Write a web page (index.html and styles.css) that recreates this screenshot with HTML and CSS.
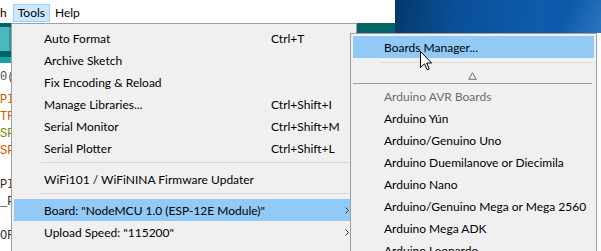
FILE: index.html
```html
<!DOCTYPE html>
<html lang="en">
<head>
  <meta charset="UTF-8" />
  <title>Arduino IDE - Tools menu</title>
  <link rel="stylesheet" href="styles.css">
</head>
<body>
  <div class="screen">
    <div class="ide">
      <div class="menubar">
        <span class="menu-title cut">h</span>
        <span class="menu-title active">Tools</span>
        <span class="menu-title">Help</span>
      </div>
      <div class="toolbar">
        <span class="tool-btn"></span>
      </div>
      <div class="tabs"></div>
      <div class="editor">
        <div class="code-line first c-grey">0(</div>
        <div class="code-line c-orange">PI</div>
        <div class="code-line c-orange">TR</div>
        <div class="code-line c-green">SP</div>
        <div class="code-line c-orange">SP</div>
        <div class="code-line">&nbsp;</div>
        <div class="code-line c-dark">PI</div>
        <div class="code-line c-dark">_P</div>
        <div class="code-line">&nbsp;</div>
        <div class="code-line c-dark">OR</div>
      </div>
    </div>
    <div class="desktop"></div>

    <!-- Tools dropdown -->
    <div class="menu tools-menu">
      <div class="menu-item"><span class="label">Auto Format</span><span class="shortcut">Ctrl+T</span></div>
      <div class="menu-item"><span class="label">Archive Sketch</span></div>
      <div class="menu-item"><span class="label">Fix Encoding &amp; Reload</span></div>
      <div class="menu-item"><span class="label">Manage Libraries...</span><span class="shortcut">Ctrl+Shift+I</span></div>
      <div class="menu-item"><span class="label">Serial Monitor</span><span class="shortcut">Ctrl+Shift+M</span></div>
      <div class="menu-item"><span class="label">Serial Plotter</span><span class="shortcut">Ctrl+Shift+L</span></div>
      <div class="menu-sep"></div>
      <div class="menu-item"><span class="label">WiFi101 / WiFiNINA Firmware Updater</span></div>
      <div class="menu-sep"></div>
      <div class="menu-item selected">
        <span class="label">Board: "NodeMCU 1.0 (ESP-12E Module)"</span>
        <svg class="sub-arrow" width="4" height="7" viewBox="0 0 4 7"><polyline points="0.5,0.5 3.5,3.5 0.5,6.5" fill="none" stroke="#333" stroke-width="1"/></svg>
      </div>
      <div class="menu-item">
        <span class="label">Upload Speed: "115200"</span>
        <svg class="sub-arrow" width="4" height="7" viewBox="0 0 4 7"><polyline points="0.5,0.5 3.5,3.5 0.5,6.5" fill="none" stroke="#333" stroke-width="1"/></svg>
      </div>
    </div>

    <!-- Boards submenu -->
    <div class="menu boards-menu">
      <div class="menu-item selected">Boards Manager...</div>
      <div class="menu-sep inset"></div>
      <div class="scroll-up">
        <svg width="9" height="8" viewBox="0 0 9 8"><polygon points="4.5,0.8 8.3,7.3 0.7,7.3" fill="none" stroke="#6d6d6d" stroke-width="1"/></svg>
      </div>
      <div class="menu-item disabled">Arduino AVR Boards</div>
      <div class="menu-item">Arduino Yún</div>
      <div class="menu-item">Arduino/Genuino Uno</div>
      <div class="menu-item">Arduino Duemilanove or Diecimila</div>
      <div class="menu-item">Arduino Nano</div>
      <div class="menu-item">Arduino/Genuino Mega or Mega 2560</div>
      <div class="menu-item">Arduino Mega ADK</div>
      <div class="menu-item">Arduino Leonardo</div>
    </div>

    <svg class="cursor" width="13" height="20" viewBox="0 0 13 20">
      <path d="M0.5,0.5 L0.5,16.5 L4.5,12.8 L7.2,18.8 L9.3,17.9 L6.7,12 L11.6,12 Z" fill="#fff" stroke="#000" stroke-width="1" stroke-linejoin="miter"/>
    </svg>
  </div>
</body>
</html>
```

FILE: styles.css
```css
* {
  box-sizing: border-box;
}

body {
  margin: 0;
  width: 601px;
  height: 251px;
  overflow: hidden;
  font-family: Lato, "Noto Sans", sans-serif;
  font-size: 12px;
  color: #000;
  background: #fff;
}

.screen {
  position: relative;
  display: flex;
  height: 251px;
}

/* IDE window behind the menus */
.ide {
  width: 395px;
  display: flex;
  flex-direction: column;
  background: #fff;
}

.menubar {
  height: 23px;
  padding-top: 4px;
  display: flex;
  background: #fff;
}

.menu-title {
  height: 18px;
  line-height: 16px;
  padding: 0 4px;
  border: 1px solid transparent;
}

.menu-title.cut {
  padding: 0;
  margin-left: -1px;
  margin-right: 5px;
}

.menu-title.active {
  background: #cce8ff;
  border-color: #99d1ff;
}

.toolbar {
  height: 34px;
  background: #006468;
  padding: 4px 0 0 0;
}

.tool-btn {
  display: block;
  width: 11px;
  height: 24px;
  background: #4db7bb;
  border-right: 2px solid #2a9a9e;
}

.tabs {
  height: 6px;
  background: #17a1a5;
}

.editor {
  padding-top: 6px;
  font-family: "Liberation Mono", monospace;
  font-size: 12px;
  line-height: 17px;
}

.code-line.first {
  margin-bottom: 6px;
}

.c-grey { color: #434f54; }
.c-orange { color: #d35400; }
.c-green { color: #728e00; }
.c-dark { color: #2c2c2c; }

.desktop {
  flex: 1;
  background:
    linear-gradient(115deg, rgba(255,255,255,0) 55%, rgba(120,180,240,0.35) 70%, rgba(255,255,255,0) 85%),
    linear-gradient(100deg, #05386b 0%, #0a4f97 25%, #0d5cad 60%, #0a56a4 100%);
}

/* Popup menus */
.menu {
  position: absolute;
  background: #f0f0f0;
  border: 1px solid #a0a0a0;
  white-space: nowrap;
}

.tools-menu {
  left: 11px;
  top: 23px;
  width: 346px;
  height: 240px;
  padding: 3px 2px;
}

.boards-menu {
  left: 350px;
  top: 33px;
  width: 247px;
  height: 230px;
  padding: 2px;
  box-shadow: 4px 0 0 #fbfbfb;
}

.menu-item {
  display: flex;
  align-items: center;
  height: 22px;
  padding-left: 30px;
}

.boards-menu .menu-item {
  padding-left: 31px;
}

.menu-item .label {
  width: 227px;
}

.menu-item.selected {
  background: #91c9f7;
}

.menu-item.disabled {
  color: #6d6d6d;
}

.sub-arrow {
  margin-left: auto;
  margin-right: 5px;
}

.menu-sep {
  height: 9px;
  margin-left: 27px;
  padding-top: 3px;
}

.menu-sep::before {
  content: "";
  display: block;
  height: 1px;
  background: #d7d7d7;
}

.menu-sep.inset {
  height: 8px;
  margin-right: 2px;
  padding-top: 4px;
}

.scroll-up {
  height: 18px;
  display: flex;
  justify-content: center;
  align-items: flex-end;
  padding-bottom: 3px;
  border-bottom: 1px solid #a0a0a0;
  margin-right: 2px;
  margin-bottom: 1px;
}

.cursor {
  position: absolute;
  left: 420px;
  top: 51px;
}
```
